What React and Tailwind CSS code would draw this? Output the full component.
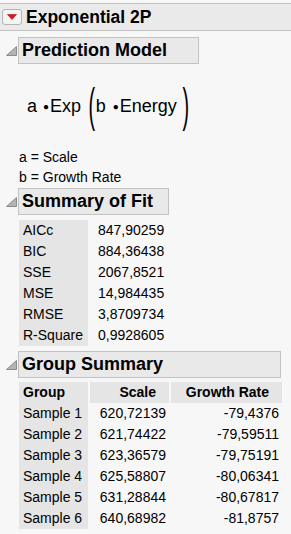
import React from 'react'

const fitRows = [
  ['AICc', '847,90259'],
  ['BIC', '884,36438'],
  ['SSE', '2067,8521'],
  ['MSE', '14,984435'],
  ['RMSE', '3,8709734'],
  ['R-Square', '0,9928605'],
]

const groupRows = [
  ['Sample 1', '620,72139', '-79,4376'],
  ['Sample 2', '621,74422', '-79,59511'],
  ['Sample 3', '623,36579', '-79,75191'],
  ['Sample 4', '625,58807', '-80,06341'],
  ['Sample 5', '631,28844', '-80,67817'],
  ['Sample 6', '640,68982', '-81,8757'],
]

function Disclosure() {
  return (
    <svg width="13" height="12" viewBox="0 0 13 12" className="shrink-0 ml-[5px]">
      <path d="M1.5 10.5 L11.5 1.5 L11.5 10.5 Z" fill="#b4b4b4" stroke="#8c8c8c" strokeWidth="1" strokeLinejoin="round" />
    </svg>
  )
}

function Heading({ title, width }) {
  return (
    <div className="flex items-center">
      <Disclosure />
      <div className={`h-[27px] flex items-center pl-[3px] border border-[#c2c2c2] bg-[#e9e9e9] text-[18px] font-bold text-black ${width}`}>
        {title}
      </div>
    </div>
  )
}

export default function App() {
  return (
    <div className="w-[291px] h-[534px] overflow-hidden bg-[#f7f7f7] pt-[3px] text-black" style={{ fontFamily: '"Liberation Sans", Arial, sans-serif' }}>
      {/* Top bar */}
      <div className="h-[28px] border-y border-[#c2c2c2] bg-[#eaeaea] flex items-center pl-[2px]">
        <div className="w-[20px] h-[16px] rounded-[3px] border border-[#b5b5b5] bg-[#f4f4f4] flex items-center justify-center">
          <svg width="10" height="6" viewBox="0 0 10 6">
            <path d="M0.5 0.5 L9.5 0.5 L5 5.5 Z" fill="#e0151b" stroke="#b00c10" strokeWidth="0.6" />
          </svg>
        </div>
        <span className="ml-[4px] text-[17.5px] font-bold">Exponential 2P</span>
      </div>

      {/* Prediction Model */}
      <div className="mt-[6px]">
        <Heading title="Prediction Model" width="w-[181px]" />
      </div>

      <div className="mt-[19px] pl-[27px] h-[46px] flex items-center text-[18px]">
        <span>a</span>
        <span className="text-[10px] ml-[6px] mr-[1px]">●</span>
        <span>Exp</span>
        <span className="ml-[3px] text-[47px] leading-none scale-x-[0.42] -translate-y-[2px]">(</span>
        <span className="-ml-[4px]">b</span>
        <span className="text-[10px] ml-[7px] mr-[1px]">●</span>
        <span>Energy</span>
        <span className="ml-[1px] text-[47px] leading-none scale-x-[0.42] -translate-y-[2px]">)</span>
      </div>

      <div className="mt-[18px] pl-[19px] text-[14px] leading-[20px]">
        <div>a = Scale</div>
        <div>b = Growth Rate</div>
      </div>

      {/* Summary of Fit */}
      <div className="mt-[1px]">
        <Heading title="Summary of Fit" width="w-[151px]" />
      </div>
      <div className="mt-[5px] ml-[19px] grid grid-cols-[69px_auto] text-[14px]">
        {fitRows.map(([k, v]) => (
          <React.Fragment key={k}>
            <div className="h-[21px] flex items-center pl-[4px] bg-[#e5e5e5]">{k}</div>
            <div className="h-[21px] flex items-center pl-[10px]">{v}</div>
          </React.Fragment>
        ))}
      </div>

      {/* Group Summary */}
      <div className="mt-[5px]">
        <Heading title="Group Summary" width="w-[263px]" />
      </div>
      <div className="mt-[4px] ml-[19px] grid grid-cols-[69px_79px_111px] gap-x-[2px] text-[14px]">
        <div className="h-[21px] flex items-center pl-[4px] bg-[#e5e5e5] font-bold">Group</div>
        <div className="h-[21px] flex items-center justify-end pr-[13px] bg-[#e5e5e5] font-bold">Scale</div>
        <div className="h-[21px] flex items-center justify-end pr-[13px] bg-[#e5e5e5] font-bold">Growth Rate</div>
        {groupRows.map(([g, s, r]) => (
          <React.Fragment key={g}>
            <div className="h-[21px] flex items-center pl-[4px] bg-[#e5e5e5]">{g}</div>
            <div className="h-[21px] flex items-center justify-end pr-[3px]">{s}</div>
            <div className="h-[21px] flex items-center justify-end pr-[3px]">{r}</div>
          </React.Fragment>
        ))}
      </div>
    </div>
  )
}
